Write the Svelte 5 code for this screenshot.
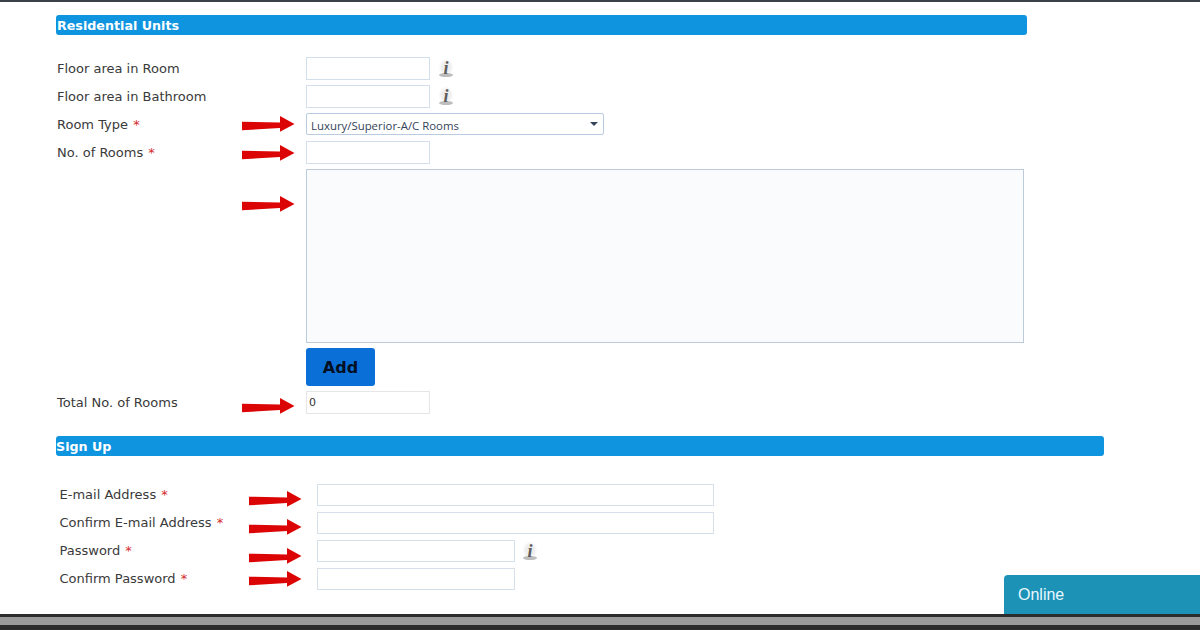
<script>
  const arrow = 'M0 5.7 L38 6.6 L38 0 L52.5 8 L38 15.7 L38 12 L0 14.3 Z';
</script>

{#snippet arr(cls)}
  <svg class="arrow {cls}" width="53" height="16" viewBox="0 0 53 16" aria-hidden="true"><path d={arrow} fill="#dc0505" /></svg>
{/snippet}

{#snippet info()}
  <span class="info"><span class="halo"></span><span class="shadow"></span><span class="i">i</span></span>
{/snippet}

<div class="page">
  <div class="topbar"></div>

  <main class="content">
    <section class="units">
      <h2 class="band">Residential Units</h2>
      <div class="rows">
        <div class="row r28"><span class="lab">Floor area in Room</span><span class="field"><input class="short" />{@render info()}</span></div>
        <div class="row r28"><span class="lab">Floor area in Bathroom</span><span class="field"><input class="short" />{@render info()}</span></div>
        <div class="row r28">
          <span class="lab">Room Type <em>*</em></span>
          {@render arr('a1')}
          <span class="field"><span class="select">Luxury/Superior-A/C Rooms<span class="caret"></span></span></span>
        </div>
        <div class="row r28">
          <span class="lab">No. of Rooms <em>*</em></span>
          {@render arr('a1b')}
          <span class="field"><input class="short" /></span>
        </div>
        <div class="row ta">
          <span></span>
          {@render arr('a2')}
          <div class="box"></div>
        </div>
        <div class="row addr"><span></span><button class="add">Add</button></div>
        <div class="row total">
          <span class="lab">Total No. of Rooms</span>
          {@render arr('a3')}
          <span class="field"><input class="short grey" value="0" /></span>
        </div>
      </div>
    </section>

    <section class="signup">
      <h2 class="band">Sign Up</h2>
      <div class="rows2">
        <div class="row2"><span class="lab">E-mail Address <em>*</em></span>{@render arr('b b1')}<input class="long" /></div>
        <div class="row2"><span class="lab">Confirm E-mail Address <em>*</em></span>{@render arr('b b2')}<input class="long" /></div>
        <div class="row2"><span class="lab">Password <em>*</em></span>{@render arr('b b3')}<span class="field"><input class="mid" />{@render info()}</span></div>
        <div class="row2"><span class="lab">Confirm Password <em>*</em></span>{@render arr('b b4')}<input class="mid" /></div>
      </div>
    </section>
  </main>

  <div class="online">Online</div>

  <footer class="foot"><div class="grey-strip"></div></footer>
</div>

<style>
  :global(body) { margin: 0; background: #fff; overflow: hidden; }
  .page { position: relative; width: 1200px; height: 630px; overflow: hidden; display: flex; flex-direction: column; font-family: "DejaVu Sans", Verdana, sans-serif; color: #333; }
  .topbar { height: 2px; background: #3b4148; flex: none; }
  .content { flex: 1; padding: 13px 0 0 56px; }
  .band { margin: 0; height: 20px; line-height: 21px; background: #0f94e0; border-radius: 3px; color: #fff; font-size: 12.7px; font-weight: 700; padding-left: 1px; box-sizing: border-box; }
  .units .band { width: 971px; }
  .signup { margin-top: 22px; }
  .signup .band { width: 1048px; padding-left: 0; }
  .rows { margin-top: 22px; }
  .row { position: relative; display: grid; grid-template-columns: 250px 1fr; align-items: start; }
  .r28 { height: 28px; }
  .ta { height: 179px; }
  .addr { height: 43px; }
  .total { height: 23px; }
  .lab { font-size: 13px; line-height: 23px; padding-left: 1px; white-space: nowrap; color: #3a3a3a; }
  .lab em { font-style: normal; color: #d42a2a; margin-left: 1px; }
  .field { display: flex; align-items: flex-start; }
  input { display: block; box-sizing: border-box; height: 23px; border: 1px solid #d3dfec; background: #fff; padding: 0 4px; margin: 0; outline: none; font: 11px "DejaVu Sans", sans-serif; color: #333; }
  .short { width: 124px; }
  .grey { border-color: #e6e6e6; padding-left: 2px; }
  .info { position: relative; display: block; width: 14px; height: 20px; margin: 2px 0 0 9px; }
  .i { position: absolute; left: 0; right: 0; top: -1px; text-align: center; font: italic 700 18px/20px "Liberation Serif", serif; color: #5c5c5c; }
  .halo { position: absolute; left: 1px; top: 1px; width: 12px; height: 14px; border-radius: 50%; background: #eeeeee; filter: blur(1px); }
  .shadow { position: absolute; left: 0; bottom: 2px; width: 14px; height: 4px; border-radius: 50%; background: #bdbdbd; filter: blur(0.7px); }
  .select { position: relative; display: block; box-sizing: border-box; width: 298px; height: 22px; border: 1px solid #b9cbe0; border-radius: 2px; font: 11.4px/24px "Open Sans", sans-serif; color: #34445a; padding-left: 4px; }
  .caret { position: absolute; right: 5px; top: 8px; border: 4px solid transparent; border-top: 4px solid #36465a; border-bottom: 0; }
  .box { box-sizing: border-box; width: 718px; height: 174px; background: #fafbfc; border: 1px solid #bccada; }
  .add { width: 69px; height: 38px; padding: 0; border: 0; border-radius: 3px; background: #0a70d8; color: #030f22; font: 700 16px "DejaVu Sans", Verdana, sans-serif; }
  .arrow { position: absolute; display: block; left: 185.5px; }
  .a1 { top: 3px; }
  .a1b { top: 3.5px; }
  .a2 { top: 27px; }
  .a3 { top: 7px; }
  .b { left: 189.5px; }
  .b1 { top: 7px; }
  .b2 { top: 7.3px; }
  .b3 { top: 8px; }
  .b4 { top: 3px; }
  .rows2 { margin-top: 28px; padding-left: 3px; }
  .row2 { position: relative; height: 28px; display: grid; grid-template-columns: 258px 1fr; align-items: start; }
  .row2 input { height: 22px; border-color: #d5e0ea; }
  .row2 .lab { padding-left: 0.5px; line-height: 22px; }
  .long { width: 397px; }
  .mid { width: 198px; }
  .row2 .info { margin-top: 2px; margin-left: 8px; }
  .online { position: absolute; right: 0; bottom: 16px; width: 196px; height: 39px; box-sizing: border-box; background: #1b92b6; border-radius: 4px 0 0 0; color: #eaf8ff; font: 16px/39px "Liberation Sans", sans-serif; padding-left: 14px; }
  .foot { flex: none; height: 16px; box-sizing: border-box; background: #2c2c2c; padding: 3px 0 5px; }
  .grey-strip { height: 8px; background: #9a9a9a; }
</style>
